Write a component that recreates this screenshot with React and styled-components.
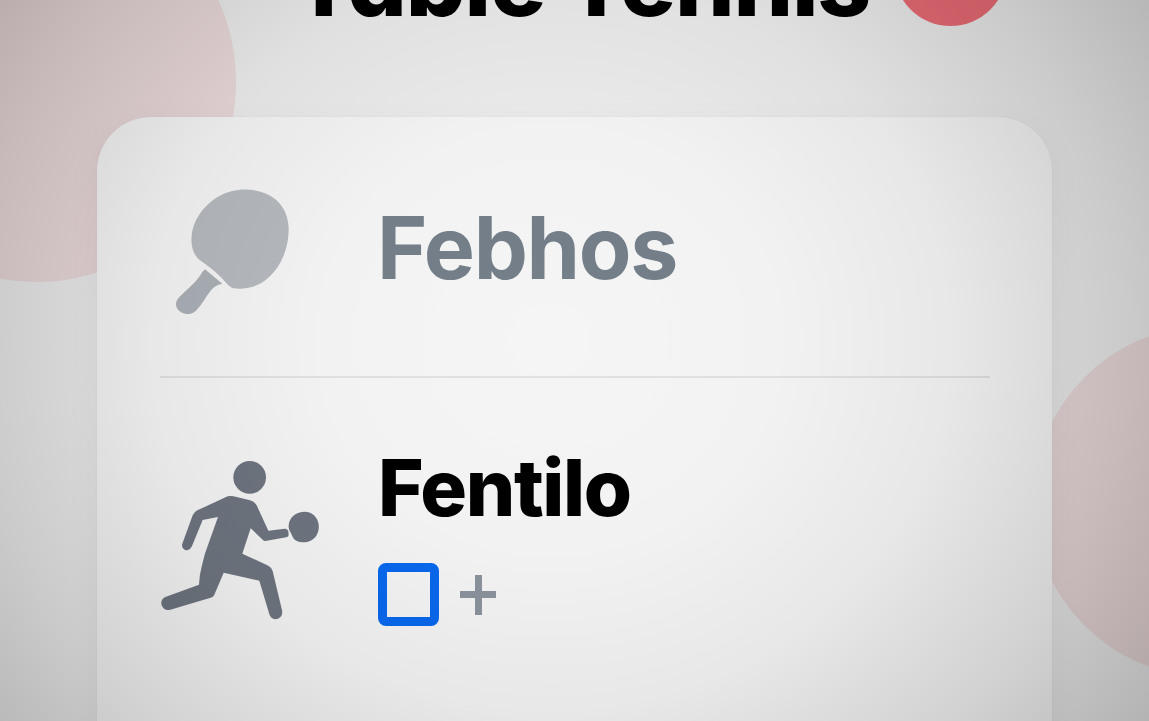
import React from 'react';
import styled, { createGlobalStyle, ThemeProvider } from 'styled-components';

const theme = {
    page: '#ededed',
    card: '#f5f5f5',
    line: '#e1e1e1',
    blush: '#ead9da',
    red: '#ea6b75',
    text: '#000000',
    muted: '#747f8a',
    icon: '#6e7580',
    accent: '#0868ee',
};

const GlobalStyle = createGlobalStyle`
    *,
    ::after,
    ::before {
        margin: 0;
        padding: 0;
        box-sizing: border-box;
    }

    body {
        overflow: hidden;
    }
`;

const Page = styled.main`
    position: relative;
    height: 721px;
    overflow: hidden;
    background: ${({ theme }) => theme.page};
    font-family: Inter, 'Liberation Sans', sans-serif;
`;

const Disc = styled.span`
    position: absolute;
    left: ${({ $x, $size }) => $x - $size / 2}px;
    top: ${({ $y, $size }) => $y - $size / 2}px;
    width: ${({ $size }) => $size}px;
    height: ${({ $size }) => $size}px;
    border-radius: 50%;
    background: ${({ theme }) => theme.blush};
`;

const Header = styled.header`
    position: relative;
    display: flex;
    align-items: flex-end;
    gap: 28px;
    height: 117px;
    padding: 0 0 91px 292px;
`;

const Title = styled.h1`
    width: 574px;
    margin-bottom: -6px;
    font-size: 94px;
    font-weight: 800;
    line-height: 100px;
    letter-spacing: -1.2px;
    white-space: nowrap;
    font-feature-settings: 'cv11';
    color: ${({ theme }) => theme.text};
`;

const Ball = styled.span`
    flex: none;
    width: 113px;
    height: 113px;
    border-radius: 50%;
    background: ${({ theme }) => theme.red};
`;

const Card = styled.section`
    position: relative;
    height: 700px;
    margin: 0 97px;
    padding: 0 62px 0 63px;
    border-radius: 54px;
    background: ${({ theme }) => theme.card};
    box-shadow: 0 10px 34px rgba(30, 40, 45, 0.05), 0 0 2px rgba(0, 0, 0, 0.04);
`;

const Row = styled.article`
    display: grid;
    grid-template-columns: 218px 1fr;
    align-items: start;
    padding-top: ${({ $top }) => $top}px;
    height: ${({ $height }) => $height}px;

    & + & {
        border-top: 2px solid ${({ theme }) => theme.line};
    }
`;

const Details = styled.div`
    display: flex;
    flex-direction: column;
    gap: 35px;
    margin-top: ${({ $offset }) => $offset}px;
`;

const Name = styled.h2`
    margin-left: ${({ $muted }) => ($muted ? '-1px' : '0')};
    font-size: ${({ $muted }) => ($muted ? 86 : 78)}px;
    font-weight: ${({ $muted }) => ($muted ? 700 : 800)};
    line-height: 80px;
    letter-spacing: ${({ $muted }) => ($muted ? '-1.3px' : '-1.4px')};
    color: ${({ theme, $muted }) => ($muted ? theme.muted : theme.text)};
`;

const Actions = styled.div`
    display: flex;
    align-items: center;
    gap: 21px;
`;

const Box = styled.button`
    width: 61px;
    height: 63px;
    border: 9px solid ${({ theme }) => theme.accent};
    border-radius: 8px;
    background: transparent;
`;

const Plus = styled.span`
    display: grid;
    place-items: center;
    width: 36px;
    height: 40px;

    &::before,
    &::after {
        content: '';
        grid-area: 1 / 1;
        background: #8b939d;
    }

    &::before {
        width: 36px;
        height: 7px;
    }

    &::after {
        width: 7px;
        height: 40px;
    }
`;

// Darkens the screen towards its corners
const Vignette = styled.div`
    position: absolute;
    inset: 0;
    pointer-events: none;
    background: radial-gradient(
        ellipse 800px 740px at 550px 340px,
        rgba(0, 0, 0, 0) 0%,
        rgba(0, 0, 0, 0.01) 28%,
        rgba(0, 0, 0, 0.055) 50%,
        rgba(0, 0, 0, 0.145) 72%,
        rgba(0, 0, 0, 0.29) 100%
    );
`;

const PaddleIcon = () => (
    <svg width='140' height='140' viewBox='30 30 420 420'>
        <path
            fill='#b6babf'
            d='M146 268C128 250 122 224 125 197C130 148 164 103 207 79C247 55 302 52 345 70C389 87 415 127 416 174C417 229 397 286 354 324C325 350 289 360 250 355C238 351 229 339 213 322C193 301 167 284 146 268Z'
        />
        <path
            fill='#abb0b7'
            d='M165 298L217 341C201 345 191 350 183 361C166 382 156 405 138 422C122 437 99 435 85 420C74 407 76 393 89 380C113 356 143 333 157 306Z'
        />
    </svg>
);

const PlayerIcon = () => (
    <svg width='170' height='170' viewBox='30 30 510 510'>
        <g fill={theme.icon}>
            <circle cx='299' cy='97' r='49' />
            <path d='M233 154Q245 152 260 156L300 166Q314 170 320 181L355 257L404 251Q413 250 415 259L416 269Q416 275 409 277L346 288Q341 288 338 284L302 250L277 326L355 362Q366 368 368 378L396 496Q400 514 384 521Q364 527 358 508L328 407L221 383L193 449Q190 456 182 458L61 494Q42 499 35 481Q30 462 48 455L147 419Q148 390 156 361Q163 327 177 292L204 216L158 225L127 301Q120 319 105 315Q92 309 98 293L128 211Q132 201 142 196Z' />
            <path d='M436 208C453 198 477 197 492 211C509 227 511 254 499 272C487 290 460 297 440 288C427 282 426 267 418 256C412 239 420 218 436 208Z' />
        </g>
    </svg>
);

const App = () => (
    <ThemeProvider theme={theme}>
        <GlobalStyle />
        <Page>
            <Disc $x={36} $y={82} $size={400} />
            <Disc $x={1208} $y={501} $size={351} />
            <Header>
                <Title>Table Tennis</Title>
                <Ball />
            </Header>
            <Card>
                <Row $top={63} $height={259}>
                    <PaddleIcon />
                    <Details $offset={28}>
                        <Name $muted>Febhos</Name>
                    </Details>
                </Row>
                <Row $top={77} $height={345}>
                    <PlayerIcon />
                    <Details $offset={-7}>
                        <Name>Fentilo</Name>
                        <Actions>
                            <Box aria-label='Select Fentilo' />
                            <Plus />
                        </Actions>
                    </Details>
                </Row>
            </Card>
            <Vignette />
        </Page>
    </ThemeProvider>
);

export default App;
